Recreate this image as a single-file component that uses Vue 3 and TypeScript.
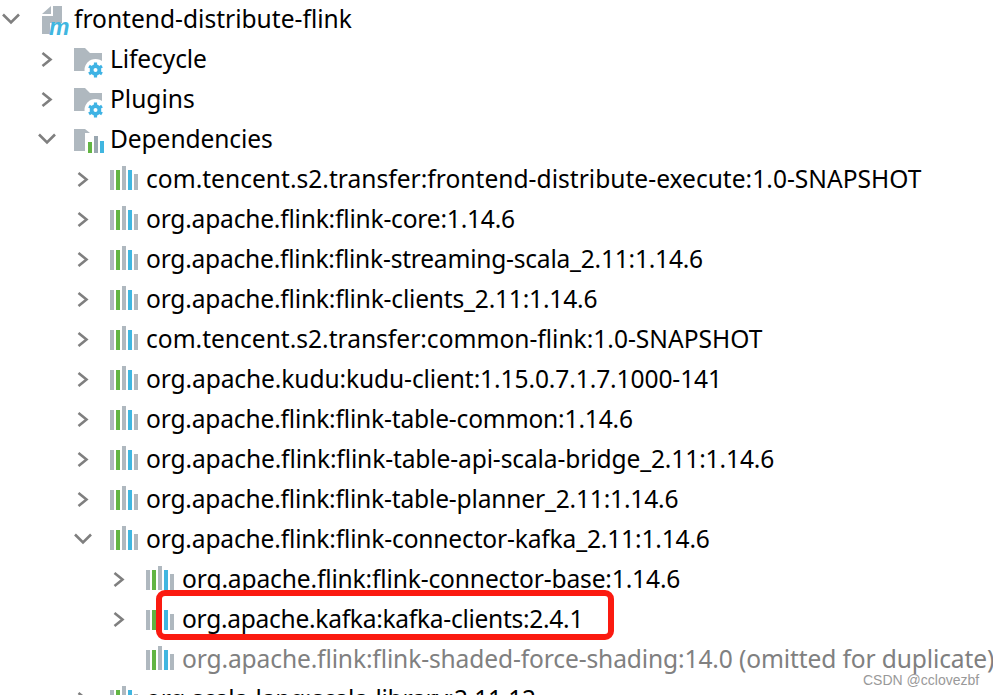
<script setup lang="ts">
type Icon = 'maven' | 'gear' | 'deps' | 'lib'

interface TreeRow {
  label: string
  depth: number
  icon: Icon
  arrow: 'open' | 'closed' | 'none'
  muted?: boolean
  track?: number // letter spacing, px
}

const rows: TreeRow[] = [
  { label: 'frontend-distribute-flink', depth: 0, icon: 'maven', arrow: 'open' },
  { label: 'Lifecycle', depth: 1, icon: 'gear', arrow: 'closed', track: -0.1 },
  { label: 'Plugins', depth: 1, icon: 'gear', arrow: 'closed' },
  { label: 'Dependencies', depth: 1, icon: 'deps', arrow: 'open', track: -0.08 },
  { label: 'com.tencent.s2.transfer:frontend-distribute-execute:1.0-SNAPSHOT', depth: 2, icon: 'lib', arrow: 'closed', track: 0.02 },
  { label: 'org.apache.flink:flink-core:1.14.6', depth: 2, icon: 'lib', arrow: 'closed', track: -0.2 },
  { label: 'org.apache.flink:flink-streaming-scala_2.11:1.14.6', depth: 2, icon: 'lib', arrow: 'closed', track: -0.22 },
  { label: 'org.apache.flink:flink-clients_2.11:1.14.6', depth: 2, icon: 'lib', arrow: 'closed', track: -0.19 },
  { label: 'com.tencent.s2.transfer:common-flink:1.0-SNAPSHOT', depth: 2, icon: 'lib', arrow: 'closed' },
  { label: 'org.apache.kudu:kudu-client:1.15.0.7.1.7.1000-141', depth: 2, icon: 'lib', arrow: 'closed', track: -0.1 },
  { label: 'org.apache.flink:flink-table-common:1.14.6', depth: 2, icon: 'lib', arrow: 'closed', track: -0.17 },
  { label: 'org.apache.flink:flink-table-api-scala-bridge_2.11:1.14.6', depth: 2, icon: 'lib', arrow: 'closed', track: -0.12 },
  { label: 'org.apache.flink:flink-table-planner_2.11:1.14.6', depth: 2, icon: 'lib', arrow: 'closed', track: -0.17 },
  { label: 'org.apache.flink:flink-connector-kafka_2.11:1.14.6', depth: 2, icon: 'lib', arrow: 'open', track: -0.16 },
  { label: 'org.apache.flink:flink-connector-base:1.14.6', depth: 3, icon: 'lib', arrow: 'closed', track: -0.14 },
  { label: 'org.apache.kafka:kafka-clients:2.4.1', depth: 3, icon: 'lib', arrow: 'closed', track: -0.28 },
  { label: 'org.apache.flink:flink-shaded-force-shading:14.0 (omitted for duplicate)', depth: 3, icon: 'lib', arrow: 'none', muted: true, track: -0.12 },
  { label: 'org.scala-lang:scala-library:2.11.12', depth: 2, icon: 'lib', arrow: 'closed', track: -0.22 },
]

function indent(depth: number) {
  return depth * 36 + 'px'
}
</script>

<template>
  <div class="page">
    <div class="tree">
      <div v-for="row in rows" :key="row.label" class="row" :class="'icon-' + row.icon" :style="{ paddingLeft: indent(row.depth) }">
        <span class="arrow">
          <svg v-if="row.arrow === 'open'" width="22" height="14" viewBox="0 0 22 14"><path d="M3 1.5 L11 9.5 L19 1.5" fill="none" stroke="#7f7f7f" stroke-width="2.6" /></svg>
          <svg v-else-if="row.arrow === 'closed'" width="22" height="18" viewBox="0 0 22 18"><path d="M6.5 2 L14.5 8.5 L6.5 15" fill="none" stroke="#7f7f7f" stroke-width="2.6" /></svg>
        </span>

        <svg v-if="row.icon === 'maven'" class="ico" width="32" height="36" viewBox="0 0 32 36">
          <path d="M0 12 L9 4 V12 Z" fill="#afb8bf" />
          <path d="M11 4 H20 V21 H8 V32 H0 V14 H11 Z" fill="#afb8bf" />
          <text x="7" y="33" class="m-letter">m</text>
        </svg>

        <svg v-else-if="row.icon === 'gear'" class="ico" width="36" height="38" viewBox="0 0 36 38">
          <path d="M0 7 H11 L16 12 H28 V30 H0 Z" fill="#afb8bf" />
          <circle cx="21.5" cy="29" r="11" fill="#fff" />
          <g fill="none" stroke="#3fb3e4">
            <circle cx="21.5" cy="29" r="3.9" stroke-width="3.8" />
            <path d="M21.5 21.5 V25 M21.5 33 V36.5 M15 25.2 L18 27 M25 31 L28 32.8 M15 32.8 L18 31 M25 27 L28 25.2" stroke-width="3.2" />
          </g>
        </svg>

        <svg v-else-if="row.icon === 'deps'" class="ico" width="36" height="36" viewBox="0 0 36 36">
          <path d="M0 7 H11 L16 11 H28 V29 H0 Z" fill="#afb8bf" />
          <rect x="11" y="11" width="21" height="20" fill="#fff" />
          <rect x="14" y="20" width="4" height="11" fill="#62b543" />
          <rect x="20" y="14" width="4" height="17" fill="#9aa7b0" />
          <rect x="26" y="19" width="4" height="12" fill="#40b6e0" />
        </svg>

        <svg v-else class="ico" width="36" height="28" viewBox="0 0 36 28">
          <rect x="0" y="4" width="4" height="20" fill="#afb8bf" />
          <rect x="6" y="4" width="4" height="20" fill="#62b543" />
          <rect x="12" y="0" width="4" height="24" fill="#afb8bf" />
          <rect x="18" y="4" width="4" height="20" fill="#40b6e0" />
          <rect x="24" y="8" width="4" height="16" fill="#afb8bf" />
        </svg>

        <span class="label" :class="{ muted: row.muted }" :style="{ letterSpacing: (row.track ?? 0) + 'px' }">{{ row.label }}</span>
      </div>
    </div>

    <div class="highlight"></div>
    <div class="watermark">CSDN @cclovezbf</div>
  </div>
</template>

<style scoped>
.page {
  position: relative;
  width: 993px;
  height: 695px;
  overflow: hidden;
  background: #fff;
  font-family: "Noto Sans", "Open Sans", sans-serif;
}
.tree { display: flex; flex-direction: column; }
.row {
  display: flex;
  align-items: center;
  height: 40px;
  white-space: nowrap;
}
.arrow {
  display: flex;
  align-items: center;
  justify-content: center;
  width: 22px;
  height: 40px;
  flex: none;
}
.ico { flex: none; margin-left: 16px; }
.icon-maven .ico { margin-left: 20px; }
.label {
  font-size: 24.55px;
  line-height: 32px;
  padding-bottom: 2px;
  color: #000;
}
.muted { color: #808080; }
.m-letter {
  font-family: "Liberation Sans", sans-serif;
  font-size: 23px;
  font-weight: 700;
  font-style: italic;
  fill: #40b6e0;
}
.highlight {
  position: absolute;
  left: 156px;
  top: 590px;
  width: 458px;
  height: 50px;
  box-sizing: border-box;
  border: 6px solid #fb1a10;
  border-radius: 9px;
}
.watermark {
  position: absolute;
  left: 863px;
  top: 672px;
  font-family: "Liberation Sans", sans-serif;
  font-size: 14px;
  color: #999;
  white-space: nowrap;
}
</style>

<style>
body { background: #fff; }
</style>
